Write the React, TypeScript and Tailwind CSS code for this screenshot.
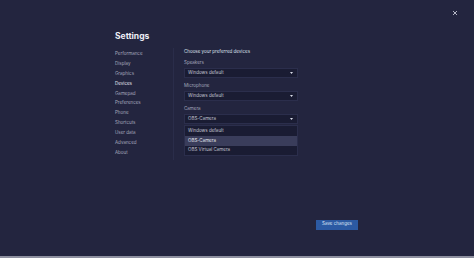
import React from "react";

const nav = ["Performance","Display","Graphics","Devices","Gamepad","Preferences","Phone","Shortcuts","User data","Advanced","About"];

function Select({ value }: { value: string }) {
  return (
    <div className="flex h-[10px] w-[114px] items-center justify-between border border-[#2b2e4c] bg-[#1a1c33] pl-[3px] pr-[4px] text-[4.5px] text-[#c3c5d4]">
      <span>{value}</span>
      <svg width="3" height="2" viewBox="0 0 3 2"><path d="M0 0h3L1.5 2z" fill="#d8dae6" /></svg>
    </div>
  );
}

export default function App() {
  return (
    <div className="relative h-[258px] w-[474px] overflow-hidden bg-[#23253f]" style={{ fontFamily: "Inter, 'Liberation Sans', sans-serif" }}>
      <div className="absolute right-[16px] top-[10px] h-[6px] w-[6px]">
        <svg width="6" height="6" viewBox="0 0 6 6"><path d="M1 1L5 5M5 1L1 5" stroke="#c4c6d4" strokeWidth="0.9" /></svg>
      </div>
      <div className="flex h-[256px] flex-col pl-[115px] pt-[30px]">
        <div className="w-[243px]">
          <div className="h-[12px] text-[8.5px] font-bold leading-[12px] text-[#eceef6]">Settings</div>
          <div className="mt-[6px] flex">
            <div className="flex w-[59px] flex-col border-r border-[#2a2d4a] pb-[2px] pt-[1px]">
              {nav.map((n) => (
                <div key={n} className={`h-[9.9px] text-[4.5px] leading-[9.9px] ${n === "Devices" ? "text-[#e6e8f2]" : "text-[#a5a8be]"}`}>{n}</div>
              ))}
            </div>
            <div className="flex flex-col pl-[10px] pt-[1px]">
              <div className="h-[6px] text-[4.5px] leading-[6px] text-[#dfe1ec]">Choose your preferred devices</div>
              <div className="mt-[5px] h-[6px] text-[4.5px] leading-[6px] text-[#a5a8be]">Speakers</div>
              <div className="mt-[2px]"><Select value="Windows default" /></div>
              <div className="mt-[5px] h-[6px] text-[4.5px] leading-[6px] text-[#a5a8be]">Microphone</div>
              <div className="mt-[2px]"><Select value="Windows default" /></div>
              <div className="mt-[5px] h-[6px] text-[4.5px] leading-[6px] text-[#a5a8be]">Camera</div>
              <div className="mt-[2px]"><Select value="OBS-Camera" /></div>
              <div className="mt-[1px] flex w-[114px] flex-col border border-[#2b2e4c] bg-[#1a1c33] text-[4.5px] text-[#c3c5d4]">
                <div className="flex h-[10px] items-center pl-[3px]">Windows default</div>
                <div className="flex h-[10px] items-center bg-[#3a3d5b] pl-[3px] text-[#e6e8f2]">OBS-Camera</div>
                <div className="flex h-[9px] items-center pl-[3px]">OBS Virtual Camera</div>
              </div>
            </div>
          </div>
          <div className="mt-[60px] flex justify-end">
            <div className="flex h-[10px] w-[42px] items-center justify-center bg-[#2c5aa3] text-[4.5px] text-[#dbe4f6]">Save changes</div>
          </div>
        </div>
      </div>
      <div className="h-[2px] w-full bg-[#8e90a0]" />
    </div>
  );
}
